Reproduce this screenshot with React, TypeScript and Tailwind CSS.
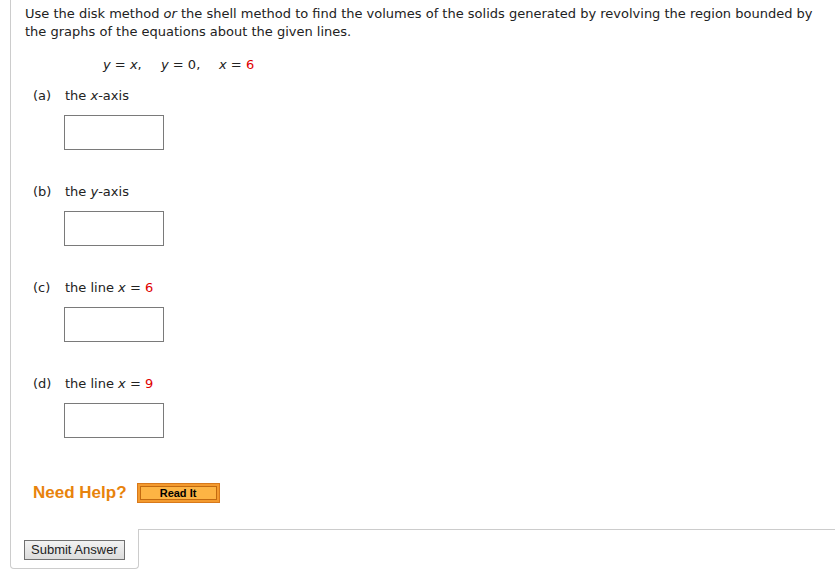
export default function App() {
  const parts = [
    { key: 'a', label: <>the <i>x</i>-axis</> },
    { key: 'b', label: <>the <i>y</i>-axis</> },
    { key: 'c', label: <>the line <i>x</i> = <span className="text-[#e00000]">6</span></> },
    { key: 'd', label: <>the line <i>x</i> = <span className="text-[#e00000]">9</span></> },
  ];

  return (
    <div className="min-h-screen bg-white text-[#222] text-[13px] leading-[18px]" style={{ fontFamily: '"DejaVu Sans", Verdana, sans-serif' }}>
      <div className="ml-[10px] w-[825px]">
        {/* question body */}
        <div className="border-l border-[#cccccc] pl-[14px] pt-[5px]">
          <p>
            Use the disk method <i>or</i> the shell method to find the volumes of the solids generated by revolving the region bounded by the graphs of the equations about the given lines.
          </p>
          <p className="mt-[15px] pl-[78px] flex whitespace-pre">
            <span className="w-[58px]"><i>y</i> = <i>x</i>,</span>
            <span className="w-[58px]"><i>y</i> = 0,</span>
            <span><i>x</i> = <span className="text-[#e00000]">6</span></span>
          </p>

          <div className="mt-[13px] pl-[8px]">
            {parts.map((p) => (
              <div key={p.key} className="h-[96px]">
                <div className="flex">
                  <span className="w-[32px]">({p.key})</span>
                  <span>{p.label}</span>
                </div>
                <div className="ml-[31px] mt-[10px] w-[100px] h-[35px] border border-[#7a7a7a] bg-white" />
              </div>
            ))}
          </div>

          <div className="flex items-center gap-[10px] pl-[8px] pt-[12px] pb-[26px]">
            <span className="text-[#e8830c] text-[17px] font-bold" style={{ fontFamily: '"Liberation Sans", Arial, sans-serif' }}>
              Need Help?
            </span>
            <button className="border border-[#d8791b] bg-[#f39a2e] p-[2px]">
              <span
                className="block w-[77px] h-[14px] border border-[#c26a10] bg-[#fdb444] text-black text-[11px] leading-[13px] font-bold"
                style={{ fontFamily: '"Liberation Sans", Arial, sans-serif' }}
              >
                Read It
              </span>
            </button>
          </div>
        </div>

        {/* submit row */}
        <div className="flex">
          <div className="w-[129px] h-[40px] border-l border-b border-r border-[#cccccc] rounded-b-[4px] pl-[13px] pt-[11px]">
            <button
              className="h-[20px] px-[6px] border border-[#707070] bg-gradient-to-b from-[#f2f2f2] to-[#dcdcdc] text-[#222] text-[13px] leading-[18px]"
              style={{ fontFamily: '"Liberation Sans", Arial, sans-serif' }}
            >
              Submit Answer
            </button>
          </div>
          <div className="flex-1 border-t border-[#cccccc]" />
        </div>
      </div>
    </div>
  );
}
